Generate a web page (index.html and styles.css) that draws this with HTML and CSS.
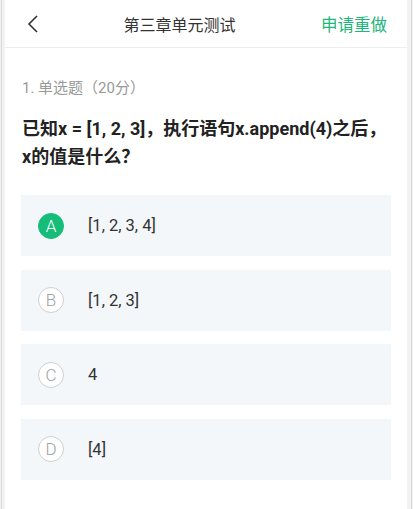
FILE: index.html
```html
<!DOCTYPE html>
<html lang="zh">
<head>
<meta charset="utf-8">
<link rel="stylesheet" href="styles.css">
</head>
<body>
<div class="shell">
  <div class="page">
    <header class="topbar">
      <div class="back">
        <svg width="11" height="18" viewBox="0 0 11 18"><path d="M10 1 L2 9 L10 17" fill="none" stroke="#333" stroke-width="1.6"/></svg>
      </div>
      <div class="title">第三章单元测试</div>
      <div class="action">申请重做</div>
    </header>
    <main class="content">
      <div class="qtype">1. 单选题（20分）</div>
      <div class="question">已知x = [1, 2, 3]，执行语句x.append(4)之后，x的值是什么？</div>
      <div class="options">
        <div class="option">
          <span class="letter selected">A</span>
          <span class="otext">[1, 2, 3, 4]</span>
        </div>
        <div class="option">
          <span class="letter">B</span>
          <span class="otext">[1, 2, 3]</span>
        </div>
        <div class="option">
          <span class="letter">C</span>
          <span class="otext">4</span>
        </div>
        <div class="option">
          <span class="letter">D</span>
          <span class="otext">[4]</span>
        </div>
      </div>
    </main>
  </div>
</div>
</body>
</html>
```
FILE: styles.css
```css
html, body {
  margin: 0;
  padding: 0;
  background: #efefef;
}
body {
  font-family: Roboto, "Noto Sans CJK SC", "Noto Sans", sans-serif;
  color: #333;
}
.shell {
  margin: 0 1px;
  padding: 0 4px 0 3px;
  border-left: 1px solid #d9d9d9;
  border-right: 1px solid #d9d9d9;
  background: #f2f2f2;
  min-height: 509px;
  box-sizing: border-box;
}
.page {
  background: #fff;
  min-height: 509px;
}
.topbar {
  height: 47px;
  border-bottom: 1px solid #eeeeee;
  display: flex;
  align-items: center;
}
.back {
  width: 45px;
  padding-left: 22px;
  box-sizing: border-box;
  display: flex;
  align-items: center;
}
.back svg {
  display: block;
  margin-top: 1px;
}
.title {
  flex: 1;
  text-align: center;
  font-size: 16px;
  color: #333;
  margin-right: 12px;
}
.action {
  font-size: 16.5px;
  color: #1fb67c;
  padding-right: 20px;
}
.content {
  padding: 30px 16px 0 16px;
}
.qtype {
  font-size: 15px;
  line-height: 20px;
  color: #999;
  padding-left: 1px;
}
.question {
  margin-top: 17px;
  font-size: 18px;
  font-weight: bold;
  line-height: 28px;
  color: #222;
  padding-left: 1px;
}
.options {
  margin-top: 24px;
  display: flex;
  flex-direction: column;
  gap: 13.5px;
}
.option {
  height: 61px;
  background: #f4f7fa;
  display: flex;
  align-items: center;
  padding-left: 17px;
}
.letter {
  width: 26px;
  height: 26px;
  box-sizing: border-box;
  border: 1px solid #cfcfcf;
  border-radius: 50%;
  background: #fff;
  color: #a0a0a0;
  font-size: 17px;
  display: flex;
  align-items: center;
  justify-content: center;
  font-weight: 300;
}
.letter.selected {
  background: #16bd78;
  border-color: #16bd78;
  color: #fff;
}
.otext {
  margin-left: 24px;
  font-size: 16.5px;
  color: #333;
}
```
